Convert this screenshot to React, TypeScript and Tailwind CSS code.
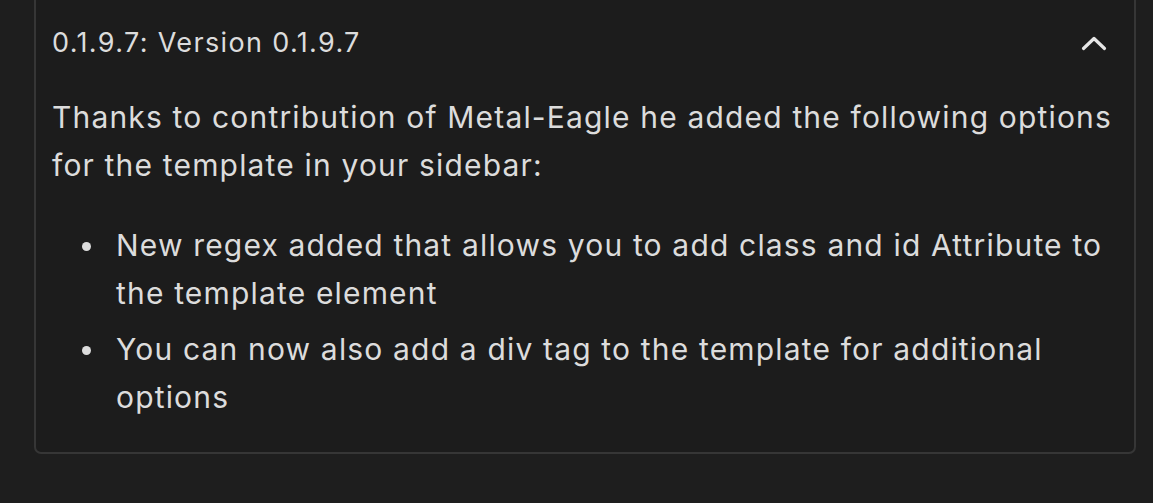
import React from 'react';

const items = [
  'New regex added that allows you to add class and id Attribute to the template element',
  'You can now also add a div tag to the template for additional options',
];

const App: React.FC = () => {
  return (
    <div className="h-[503px] overflow-hidden bg-[#1e1e1e] pl-[34px] pr-[17px] font-['Inter',sans-serif] text-[#dcdcdc]">
      <div className="-mt-[10px] rounded-[7px] border-2 border-[#363636] bg-[#1c1c1c] pb-[31px]">
        {/* cabecera de la versión */}
        <div className="flex items-center pl-[16px] pr-[27px] pt-[35px]">
          <span className="text-[27px] leading-[32px] tracking-[0.05em]">0.1.9.7: Version 0.1.9.7</span>
          <svg className="ml-auto" width="26" height="15" viewBox="0 0 26 15" fill="none">
            <polyline
              points="2.5,12.5 13,2.5 23.5,12.5"
              stroke="#e6e6e6"
              strokeWidth="3.2"
              strokeLinecap="round"
              strokeLinejoin="round"
            />
          </svg>
        </div>
        <div className="mt-[34px] px-[16px] text-[30px] leading-[48px] tracking-[0.039em]">
          <p>Thanks to contribution of Metal-Eagle he added the following options for the template in your sidebar:</p>
          <ul className="mt-[32px] flex flex-col gap-[8px]">
            {items.map((item) => (
              <li key={item} className="flex items-start">
                <span className="ml-[30px] mt-[21px] h-[9px] w-[9px] shrink-0 rounded-full bg-[#dcdcdc]" />
                <span className="ml-[25px]">{item}</span>
              </li>
            ))}
          </ul>
        </div>
      </div>
    </div>
  );
};

export default App;
